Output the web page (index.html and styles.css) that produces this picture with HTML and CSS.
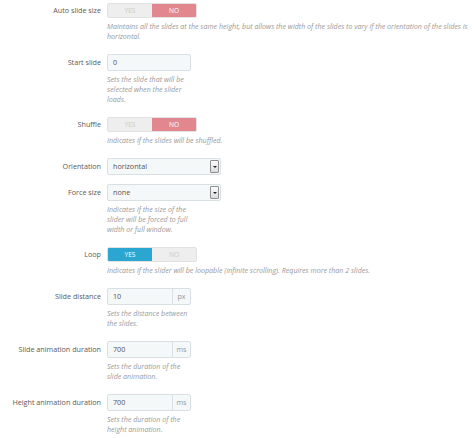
FILE: index.html
```html
<!DOCTYPE html>
<html>
<head>
<meta charset="utf-8">
<link rel="stylesheet" href="styles.css">
</head>
<body>
<div class="form">
  <div class="group">
    <div class="lbl lbl-switch">Auto slide size</div>
    <div class="ctl">
      <div class="switch"><span class="opt">YES</span><span class="opt no-on">NO</span></div>
      <p class="help">Maintains all the slides at the same height, but allows the width of the slides to vary if the orientation of the slides is horizontal.</p>
    </div>
  </div>
  <div class="group">
    <div class="lbl">Start slide</div>
    <div class="ctl">
      <div class="input">0</div>
      <p class="help narrow">Sets the slide that will be selected when the slider loads.</p>
    </div>
  </div>
  <div class="group">
    <div class="lbl lbl-switch">Shuffle</div>
    <div class="ctl">
      <div class="switch"><span class="opt">YES</span><span class="opt no-on">NO</span></div>
      <p class="help">Indicates if the slides will be shuffled.</p>
    </div>
  </div>
  <div class="group">
    <div class="lbl">Orientation</div>
    <div class="ctl">
      <div class="select"><span class="sel-text">horizontal</span><span class="sel-btn"><span class="tri"></span></span></div>
    </div>
  </div>
  <div class="group">
    <div class="lbl">Force size</div>
    <div class="ctl">
      <div class="select"><span class="sel-text">none</span><span class="sel-btn"><span class="tri"></span></span></div>
      <p class="help narrow">Indicates if the size of the slider will be forced to full width or full window.</p>
    </div>
  </div>
  <div class="group">
    <div class="lbl lbl-switch">Loop</div>
    <div class="ctl">
      <div class="switch"><span class="opt yes-on">YES</span><span class="opt">NO</span></div>
      <p class="help">Indicates if the slider will be loopable (infinite scrolling). Requires more than 2 slides.</p>
    </div>
  </div>
  <div class="group">
    <div class="lbl">Slide distance</div>
    <div class="ctl">
      <div class="input-group"><span class="ig-val">10</span><span class="addon">px</span></div>
      <p class="help narrow">Sets the distance between the slides.</p>
    </div>
  </div>
  <div class="group">
    <div class="lbl">Slide animation duration</div>
    <div class="ctl">
      <div class="input-group"><span class="ig-val">700</span><span class="addon">ms</span></div>
      <p class="help narrow">Sets the duration of the slide animation.</p>
    </div>
  </div>
  <div class="group">
    <div class="lbl">Height animation duration</div>
    <div class="ctl">
      <div class="input-group"><span class="ig-val">700</span><span class="addon">ms</span></div>
      <p class="help narrow">Sets the duration of the height animation.</p>
    </div>
  </div>
</div>
</body>
</html>
```
FILE: styles.css
```css
html, body {
  margin: 0;
  padding: 0;
  background: #ffffff;
  font-family: "Open Sans", "DejaVu Sans", sans-serif;
}
.form {
  padding-top: 3px;
}
.group {
  display: grid;
  grid-template-columns: 101px 1fr;
  column-gap: 6px;
  margin-bottom: 9px;
}
.lbl {
  text-align: right;
  font-size: 7.2px;
  color: #5a5a5a;
  line-height: 17px;
  white-space: nowrap;
}
.lbl-switch {
  line-height: 15px;
}
.ctl {
  min-width: 0;
  padding-right: 3px;
}
.switch {
  display: flex;
  width: 90px;
  height: 15px;
  box-sizing: border-box;
  background: #eeeeee;
  border: 1px solid #e2e2e2;
  border-radius: 2px;
  overflow: hidden;
}
.opt {
  flex: 1;
  text-align: center;
  font-size: 6.6px;
  line-height: 13px;
  color: #c9c9c9;
}
.opt.no-on {
  background: #e3878e;
  color: #ffffff;
}
.opt.yes-on {
  background: #2aa6d1;
  color: #ffffff;
}
.input {
  width: 84px;
  height: 17px;
  box-sizing: border-box;
  border: 1px solid #d8e0e3;
  border-radius: 2px;
  background: #f5f8f9;
  font-size: 7.2px;
  color: #555555;
  padding-left: 5px;
  line-height: 15px;
}
.input-group {
  display: flex;
  width: 84px;
  height: 17px;
  box-sizing: border-box;
  border: 1px solid #d8e0e3;
  border-radius: 2px;
  background: #f5f8f9;
  font-size: 7.2px;
  line-height: 15px;
}
.ig-val {
  flex: 1;
  padding-left: 5px;
  color: #555555;
}
.addon {
  width: 17px;
  text-align: center;
  border-left: 1px solid #d8e0e3;
  color: #999999;
}
.select {
  display: flex;
  align-items: center;
  width: 114px;
  height: 17px;
  box-sizing: border-box;
  border: 1px solid #d8e0e3;
  border-radius: 2px;
  background: #f5f8f9;
  font-size: 7.2px;
  color: #555555;
}
.sel-text {
  flex: 1;
  padding-left: 5px;
  line-height: 15px;
}
.sel-btn {
  display: flex;
  align-items: center;
  justify-content: center;
  width: 9px;
  height: 13px;
  margin-right: 1px;
  box-sizing: border-box;
  border: 1px solid #8f8f8f;
  border-radius: 1px;
  background: linear-gradient(#fbfbfb, #dcdcdc);
}
.tri {
  width: 0;
  height: 0;
  border-left: 2px solid transparent;
  border-right: 2px solid transparent;
  border-top: 2.5px solid #222222;
}
.help {
  margin: 3px 0 4px 0;
  font-size: 7.1px;
  line-height: 10px;
  color: #9a9a9a;
  font-style: italic;
}
.help.narrow {
  width: 84px;
}
```
